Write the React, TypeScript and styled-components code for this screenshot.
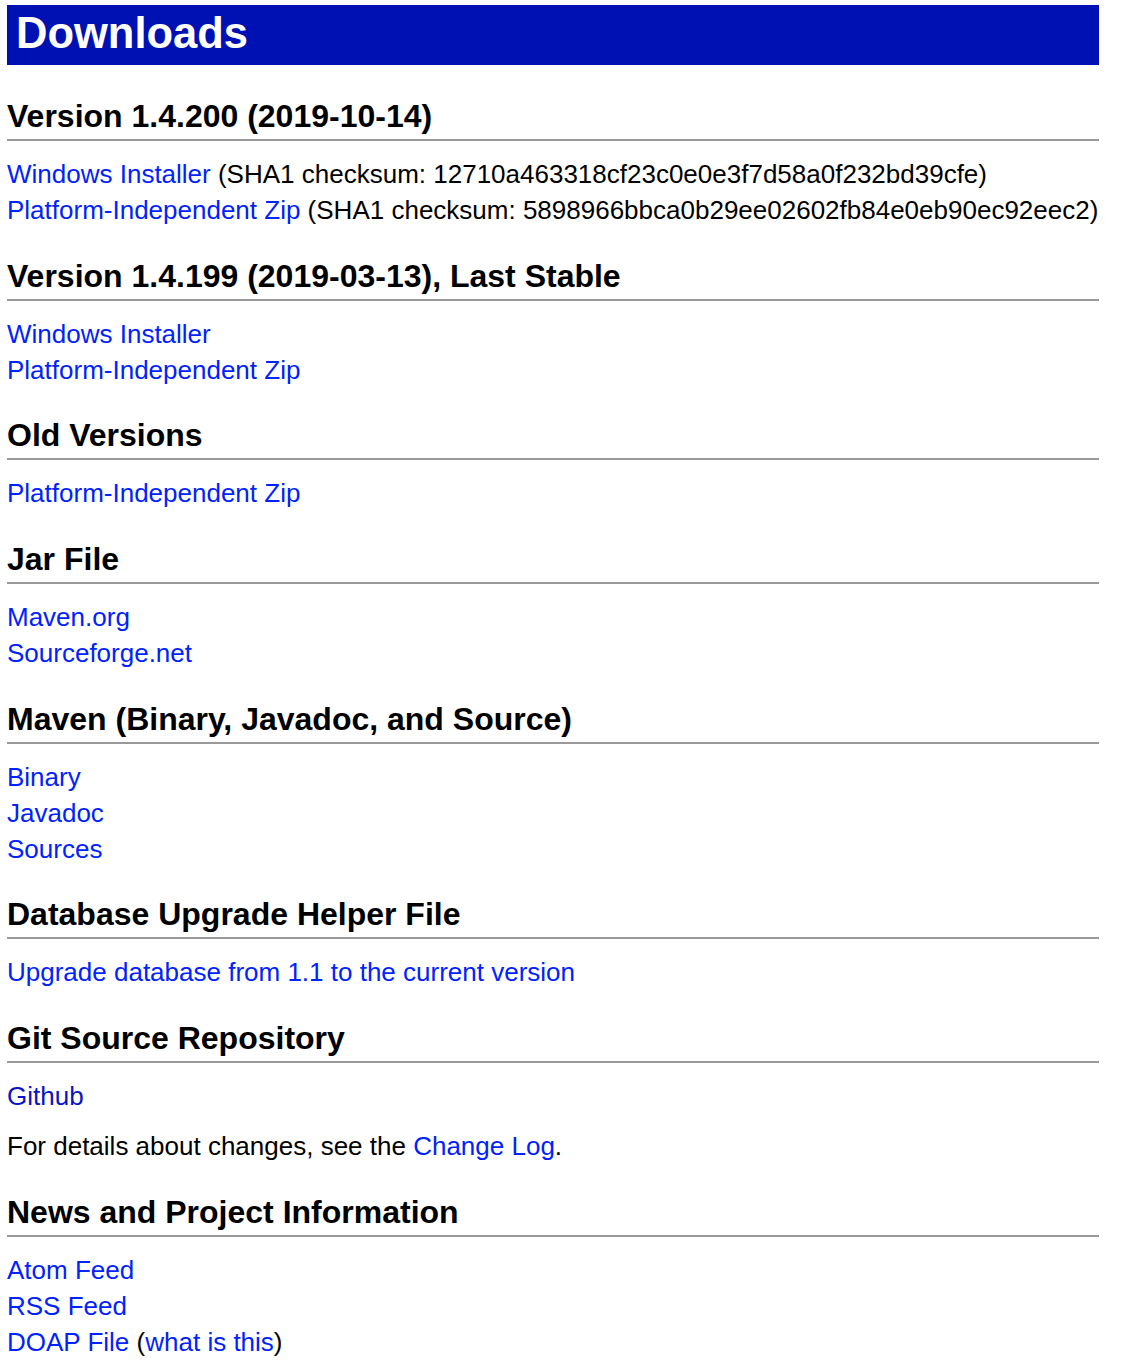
import React from 'react';
import styled, { createGlobalStyle } from 'styled-components';

const GlobalStyle = createGlobalStyle`
  body {
    margin: 0;
    background: #fff;
    color: #000;
    font-family: "Liberation Sans", Arial, Helvetica, sans-serif;
  }
`;

const Page = styled.div`
  width: 1092px;
  padding: 5px 0 20px 7px;
`;

const Banner = styled.h1`
  margin: 0;
  height: 60px;
  padding: 0 9px;
  background: #0011b4;
  color: #fff;
  font-size: 43.5px;
  line-height: 57px;
  font-weight: bold;
`;

const Section = styled.section`
  margin-top: 29.7px;

  &:first-of-type {
    margin-top: 33px;
  }
`;

const Heading = styled.h2`
  margin: 0;
  padding-bottom: 4px;
  border-bottom: 2px solid #999;
  font-size: 32px;
  line-height: 37px;
  font-weight: bold;
`;

const Lines = styled.div`
  margin-top: 15px;
  font-size: 26px;
  line-height: 36px;
`;

const Line = styled.div`
  white-space: nowrap;
`;

const Note = styled.p`
  margin: 14px 0 0;
  font-size: 26px;
  line-height: 36px;
`;

const Link = styled.a<{ $visited?: boolean }>`
  color: ${p => (p.$visited ? '#0a14c4' : '#0022ff')};
  text-decoration: none;
  cursor: pointer;
`;

type Item = { label: string; extra?: string; visited?: boolean };

const sections: { title: string; items: Item[] }[] = [
  {
    title: 'Version 1.4.200 (2019-10-14)',
    items: [
      { label: 'Windows Installer', extra: ' (SHA1 checksum: 12710a463318cf23c0e0e3f7d58a0f232bd39cfe)' },
      { label: 'Platform-Independent Zip', extra: ' (SHA1 checksum: 5898966bbca0b29ee02602fb84e0eb90ec92eec2)' },
    ],
  },
  {
    title: 'Version 1.4.199 (2019-03-13), Last Stable',
    items: [{ label: 'Windows Installer' }, { label: 'Platform-Independent Zip' }],
  },
  {
    title: 'Old Versions',
    items: [{ label: 'Platform-Independent Zip' }],
  },
  {
    title: 'Jar File',
    items: [{ label: 'Maven.org' }, { label: 'Sourceforge.net' }],
  },
  {
    title: 'Maven (Binary, Javadoc, and Source)',
    items: [{ label: 'Binary' }, { label: 'Javadoc' }, { label: 'Sources' }],
  },
  {
    title: 'Database Upgrade Helper File',
    items: [{ label: 'Upgrade database from 1.1 to the current version' }],
  },
];

export default function App() {
  return (
    <>
      <GlobalStyle />
      <Page>
        <Banner>Downloads</Banner>

        {sections.map(section => (
          <Section key={section.title}>
            <Heading>{section.title}</Heading>
            <Lines>
              {section.items.map(item => (
                <Line key={item.label}>
                  <Link>{item.label}</Link>
                  {item.extra}
                </Line>
              ))}
            </Lines>
          </Section>
        ))}

        <Section>
          <Heading>Git Source Repository</Heading>
          <Lines>
            <Line>
              <Link $visited>Github</Link>
            </Line>
          </Lines>
          <Note>
            For details about changes, see the <Link>Change Log</Link>.
          </Note>
        </Section>

        <Section>
          <Heading>News and Project Information</Heading>
          <Lines>
            <Line>
              <Link>Atom Feed</Link>
            </Line>
            <Line>
              <Link>RSS Feed</Link>
            </Line>
            <Line>
              <Link>DOAP File</Link> (<Link>what is this</Link>)
            </Line>
          </Lines>
        </Section>
      </Page>
    </>
  );
}
